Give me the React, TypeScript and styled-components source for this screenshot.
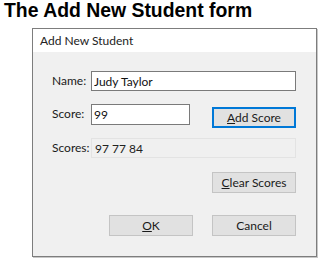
import React from 'react';
import styled, { createGlobalStyle } from 'styled-components';

const GlobalStyle = createGlobalStyle`
  html, body {
    margin: 0;
    padding: 0;
    background: #ffffff;
  }
  * {
    box-sizing: border-box;
  }
`;

const App: React.FC = () => {
  return (
    <Page>
      <GlobalStyle />
      <Heading>The Add New Student form</Heading>
      <DialogWindow>
        <TitleBar>Add New Student</TitleBar>
        <ClientArea>
          <FormRow $top={0}>
            <FieldLabel>Name:</FieldLabel>
            <TextBox $width={205} defaultValue="Judy Taylor" />
          </FormRow>
          <FormRow $top={13}>
            <FieldLabel>Score:</FieldLabel>
            <TextBox $width={99} $height={21} defaultValue="99" />
            <Spacer />
            <DialogButton $focused $offset={3}>
              <u>A</u>dd Score
            </DialogButton>
          </FormRow>
          <FormRow $top={10}>
            <FieldLabel>Scores:</FieldLabel>
            <ReadOnlyBox>97 77 84</ReadOnlyBox>
          </FormRow>
          <FormRow $top={14}>
            <Spacer />
            <DialogButton>
              <u>C</u>lear Scores
            </DialogButton>
          </FormRow>
          <FormRow $top={22}>
            <Spacer />
            <DialogButton>
              <u>O</u>K
            </DialogButton>
            <DialogButton $left={19}>Cancel</DialogButton>
          </FormRow>
        </ClientArea>
      </DialogWindow>
    </Page>
  );
};

export default App;

const Page = styled.div`
  width: 325px;
  height: 263px;
  background: #ffffff;
  overflow: hidden;
`;
const Heading = styled.h1`
  margin: 0;
  padding: 0 0 0 4px;
  height: 21px;
  font-family: 'Liberation Sans', Arial, sans-serif;
  font-size: 19.4px;
  font-weight: 700;
  line-height: 21px;
  color: #000000;
  white-space: nowrap;
`;
const DialogWindow = styled.div`
  display: flex;
  flex-direction: column;
  width: 285px;
  height: 229px;
  margin: 7px 0 0 32px;
  border: 1px solid #7d7d7d;
  box-shadow: 1px 1px 0 #c8c8c8;
  font-family: Lato, 'Noto Sans', sans-serif;
  font-size: 12px;
  color: #1a1a1a;
`;
const TitleBar = styled.div`
  display: flex;
  align-items: center;
  height: 23px;
  padding: 0 0 0 7px;
  background: #ffffff;
  color: #222222;
`;
const ClientArea = styled.div`
  display: flex;
  flex-direction: column;
  flex-grow: 1;
  padding: 19px 20px 0 19px;
  background: #f0f0f0;
`;
const FormRow = styled.div<{ $top: number }>`
  display: flex;
  align-items: flex-start;
  margin-top: ${({ $top }) => $top}px;
`;
const FieldLabel = styled.span`
  width: 39px;
  padding-top: 1px;
  line-height: 18px;
  white-space: nowrap;
`;
const TextBox = styled.input<{ $width: number; $height?: number }>`
  width: ${({ $width }) => $width}px;
  height: ${({ $height }) => $height ?? 20}px;
  padding: 0 2px;
  border: 1px solid #7a7a7a;
  background: #ffffff;
  font-family: inherit;
  font-size: inherit;
  color: #111111;
  outline: none;
`;
const ReadOnlyBox = styled.div`
  display: flex;
  align-items: center;
  width: 205px;
  height: 20px;
  padding: 0 3px;
  border: 1px solid #e3e3e3;
  background: #f0f0f0;
  color: #222222;
`;
const Spacer = styled.div`
  flex-grow: 1;
`;
const DialogButton = styled.button<{ $focused?: boolean; $offset?: number; $left?: number }>`
  width: 84px;
  height: 21px;
  margin-top: ${({ $offset }) => $offset ?? 0}px;
  margin-left: ${({ $left }) => $left ?? 0}px;
  padding: 0;
  border: 1px solid ${({ $focused }) => ($focused ? '#0078d7' : '#c4c4c4')};
  box-shadow: ${({ $focused }) => ($focused ? 'inset 0 0 0 1px #0078d7' : 'none')};
  background: #e1e1e1;
  font-family: inherit;
  font-size: inherit;
  color: #1a1a1a;
  cursor: default;

  u {
    text-underline-offset: 1px;
  }
`;
